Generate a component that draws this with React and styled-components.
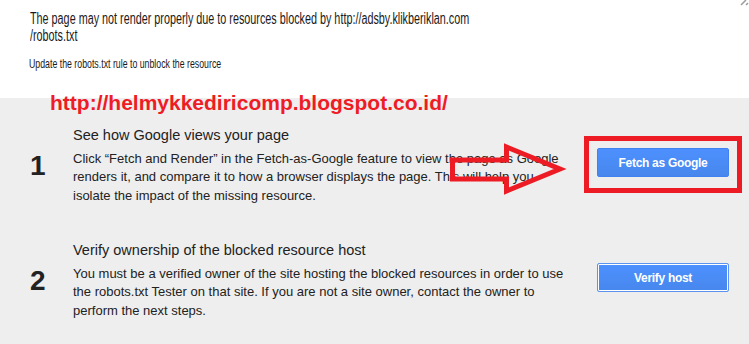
import React from "react";
import styled, { createGlobalStyle } from "styled-components";

const Global = createGlobalStyle`
  html, body { margin: 0; padding: 0; background: #fff; }
  body { font-family: "Liberation Sans", Arial, sans-serif; color: #222; }
`;

const Page = styled.div`
  position: relative;
  width: 749px;
  height: 344px;
  overflow: hidden;
  display: flex;
  flex-direction: column;
  background: #fff;
`;

const Header = styled.header`
  height: 98px;
  box-sizing: border-box;
  padding: 9.6px 0 0 30px;
  display: flex;
  flex-direction: column;
`;

const Condensed = styled.span`
  display: inline-block;
  white-space: nowrap;
  transform: scaleX(0.675);
  transform-origin: left top;
`;

const Title = styled.h1`
  margin: 0;
  font-weight: normal;
  font-size: 16px;
  line-height: 17.7px;
  color: #1a1a1a;
`;

const Subtitle = styled.p`
  margin: 10.5px 0 0 -1px;
  font-size: 13px;
  line-height: 16px;
  color: #1a1a1a;
`;

const Panel = styled.section`
  flex: 1;
  background: #eeeeee;
  padding-top: 28px;
  display: flex;
  flex-direction: column;
  gap: 36px;
`;

const Step = styled.div`
  display: grid;
  grid-template-columns: 43px 524px 132px;
  align-items: center;
  padding-left: 30px;
`;

const Num = styled.div`
  font-size: 28px;
  line-height: 28px;
  font-weight: bold;
  color: #222;
`;

const Body = styled.div`
  max-width: 500px;
`;

const Heading = styled.h2`
  margin: 0 0 5.5px;
  font-size: 14.5px;
  line-height: 18px;
  font-weight: normal;
  color: #222;
`;

const Text = styled.p`
  margin: 0;
  font-size: 13px;
  line-height: 18.5px;
  color: #222;
`;

const Button = styled.button`
  width: 132px;
  height: 29px;
  margin-bottom: 6px;
  box-sizing: border-box;
  border: 1px solid ${(p) => (p.$focused ? "#5b93ef" : "#3f82f0")};
  border-radius: 2px;
  background: linear-gradient(#4d90fe, #4787ed);
  box-shadow: ${(p) => (p.$focused ? "inset 0 0 0 1px #fff" : "none")};
  color: #fff;
  font-family: "Liberation Sans", Arial, sans-serif;
  font-weight: bold;
  font-size: 12px;
  letter-spacing: -0.3px;
  padding: 0;
  cursor: pointer;
`;

const Watermark = styled.div`
  position: absolute;
  left: 50px;
  top: 90.7px;
  font-size: 21px;
  line-height: 24px;
  font-weight: bold;
  color: #ee1c25;
`;

const Highlight = styled.div`
  position: absolute;
  left: 584px;
  top: 136px;
  width: 158px;
  height: 57px;
  box-sizing: border-box;
  border: 5px solid #ed1c24;
`;

const Arrow = styled.svg`
  position: absolute;
  left: 0;
  top: 0;
  pointer-events: none;
`;

const Corner = styled.svg`
  position: absolute;
  right: 0;
  top: 0;
`;

export default function App() {
  return (
    <>
      <Global />
      <Page>
        <Header>
          <Title>
            <Condensed>
              The page may not render properly due to resources blocked by http://adsby.klikberiklan.com
              <br />
              /robots.txt
            </Condensed>
          </Title>
          <Subtitle>
            <Condensed>Update the robots.txt rule to unblock the resource</Condensed>
          </Subtitle>
        </Header>
        <Panel>
          <Step>
            <Num>1</Num>
            <Body>
              <Heading>See how Google views your page</Heading>
              <Text>
                Click “Fetch and Render” in the Fetch-as-Google feature to view the page as Google renders it, and
                compare it to how a browser displays the page. This will help you isolate the impact of the missing
                resource.
              </Text>
            </Body>
            <Button>Fetch as Google</Button>
          </Step>
          <Step>
            <Num>2</Num>
            <Body>
              <Heading>Verify ownership of the blocked resource host</Heading>
              <Text>
                You must be a verified owner of the site hosting the blocked resources in order to use the robots.txt
                Tester on that site. If you are not a site owner, contact the owner to perform the next steps.
              </Text>
            </Body>
            <Button $focused>Verify host</Button>
          </Step>
        </Panel>
        <Watermark>http://helmykkediricomp.blogspot.co.id/</Watermark>
        <Highlight />
        <Arrow width="749" height="344" viewBox="0 0 749 344">
          <polygon
            points="452.5,160 506.5,160 506.5,147 560,169 506.5,191 506.5,179 452.5,179"
            fill="none"
            stroke="#ed1c24"
            strokeWidth="5"
            strokeLinejoin="miter"
          />
        </Arrow>
        <Corner width="10" height="6" viewBox="0 0 10 6">
          <path d="M2 5 L7 0 M7 5 L9 3" stroke="#9a9a9a" strokeWidth="1.5" />
        </Corner>
      </Page>
    </>
  );
}
